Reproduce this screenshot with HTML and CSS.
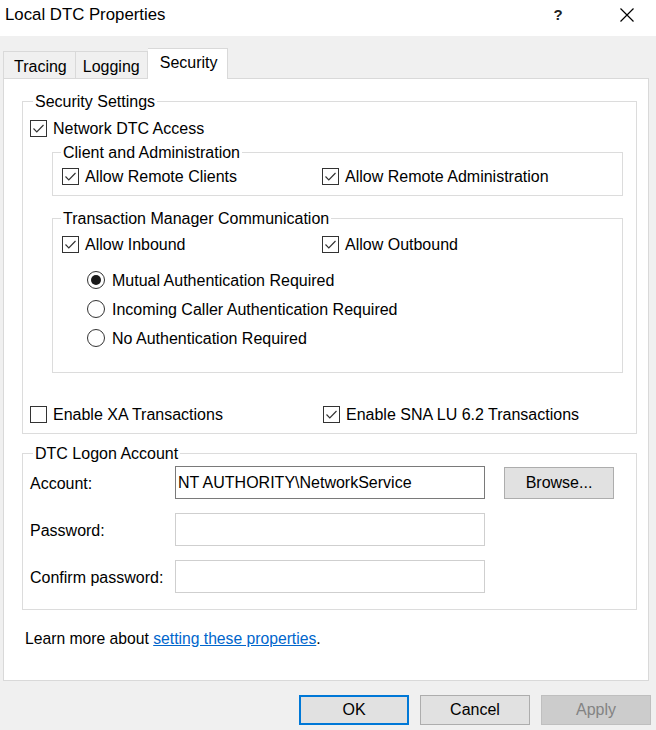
FILE: index.html
```html
<!DOCTYPE html>
<html lang="en">
<head>
    <meta charset="UTF-8">
    <title>Local DTC Properties</title>
    <link rel="stylesheet" href="styles.css">
</head>
<body>
    <div class="titlebar">
        <span class="title">Local DTC Properties</span>
        <div class="caption-btns">
            <span class="help">?</span>
            <span class="close">
                <svg width="16" height="16" viewBox="0 0 16 16"><path d="M1.5 1.5 L14.5 14.5 M14.5 1.5 L1.5 14.5" stroke="#000" stroke-width="1.2" fill="none"/></svg>
            </span>
        </div>
    </div>

    <div class="tabs">
        <div class="tab first">Tracing</div>
        <div class="tab">Logging</div>
        <div class="tab selected">Security</div>
    </div>

    <div class="panel">
        <fieldset class="group security">
            <legend>Security Settings</legend>
            <div class="check">
                <span class="box"><svg width="15" height="15" viewBox="0 0 15 15"><path d="M2.5 7.5 L5.8 10.8 L12.5 4" stroke="#333" stroke-width="1.2" fill="none"/></svg></span>
                <span class="text">Network DTC Access</span>
            </div>

            <fieldset class="group sub client">
                <legend>Client and Administration</legend>
                <div class="cols">
                    <div class="check">
                        <span class="box"><svg width="15" height="15" viewBox="0 0 15 15"><path d="M2.5 7.5 L5.8 10.8 L12.5 4" stroke="#333" stroke-width="1.2" fill="none"/></svg></span>
                        <span class="text">Allow Remote Clients</span>
                    </div>
                    <div class="check">
                        <span class="box"><svg width="15" height="15" viewBox="0 0 15 15"><path d="M2.5 7.5 L5.8 10.8 L12.5 4" stroke="#333" stroke-width="1.2" fill="none"/></svg></span>
                        <span class="text">Allow Remote Administration</span>
                    </div>
                </div>
            </fieldset>

            <fieldset class="group sub tmc">
                <legend>Transaction Manager Communication</legend>
                <div class="cols">
                    <div class="check">
                        <span class="box"><svg width="15" height="15" viewBox="0 0 15 15"><path d="M2.5 7.5 L5.8 10.8 L12.5 4" stroke="#333" stroke-width="1.2" fill="none"/></svg></span>
                        <span class="text">Allow Inbound</span>
                    </div>
                    <div class="check">
                        <span class="box"><svg width="15" height="15" viewBox="0 0 15 15"><path d="M2.5 7.5 L5.8 10.8 L12.5 4" stroke="#333" stroke-width="1.2" fill="none"/></svg></span>
                        <span class="text">Allow Outbound</span>
                    </div>
                </div>
                <div class="radios">
                    <div class="radio selected"><span class="circle"></span><span class="text">Mutual Authentication Required</span></div>
                    <div class="radio"><span class="circle"></span><span class="text">Incoming Caller Authentication Required</span></div>
                    <div class="radio"><span class="circle"></span><span class="text">No Authentication Required</span></div>
                </div>
            </fieldset>

            <div class="cols wide">
                <div class="check">
                    <span class="box"></span>
                    <span class="text">Enable XA Transactions</span>
                </div>
                <div class="check">
                    <span class="box"><svg width="15" height="15" viewBox="0 0 15 15"><path d="M2.5 7.5 L5.8 10.8 L12.5 4" stroke="#333" stroke-width="1.2" fill="none"/></svg></span>
                    <span class="text">Enable SNA LU 6.2 Transactions</span>
                </div>
            </div>
        </fieldset>

        <fieldset class="group logon">
            <legend>DTC Logon Account</legend>
            <div class="field">
                <span class="field-label">Account:</span>
                <input class="input active" type="text" value="NT AUTHORITY\NetworkService" readonly>
                <button class="btn browse">Browse...</button>
            </div>
            <div class="field">
                <span class="field-label">Password:</span>
                <input class="input" type="text" readonly>
            </div>
            <div class="field">
                <span class="field-label">Confirm password:</span>
                <input class="input" type="text" readonly>
            </div>
        </fieldset>

        <p class="learn">Learn more about <a href="#">setting these properties</a>.</p>
    </div>

    <div class="buttons">
        <button class="btn default">OK</button>
        <button class="btn">Cancel</button>
        <button class="btn disabled">Apply</button>
    </div>
</body>
</html>
```

FILE: styles.css
```css
html {
    overflow: hidden;
}
body {
    margin: 0;
    width: 656px;
    height: 730px;
    background-color: #f0f0f0;
    font-family: "Liberation Sans", Arial, sans-serif;
    font-size: 16px;
    line-height: 18px;
    color: #000;
}
.titlebar {
    height: 36px;
    background-color: #fff;
    display: flex;
    justify-content: space-between;
    align-items: flex-start;
    box-sizing: border-box;
    padding: 6px 6px 0 5px;
}
.title {
    font-size: 16.8px;
}
.caption-btns {
    display: flex;
    gap: 21px;
}
.help, .close {
    width: 46px;
    height: 18px;
    display: flex;
    justify-content: center;
    align-items: center;
}
.help {
    font-size: 15px;
    font-weight: bold;
    color: #222;
    padding-right: 4px;
    box-sizing: border-box;
}
.tabs {
    display: flex;
    align-items: flex-end;
    height: 30px;
    margin-top: 12px;
    padding-left: 3px;
}
.tab {
    height: 27px;
    box-sizing: border-box;
    padding: 3px 7px 0 7px;
    display: flex;
    align-items: center;
    border-top: 1px solid #d9d9d9;
    border-right: 1px solid #d9d9d9;
    background-color: #f0f0f0;
}
.tab.first {
    border-left: 1px solid #d9d9d9;
    padding-left: 10px;
    padding-right: 8px;
}
.tab.selected {
    height: 31px;
    margin-bottom: -1px;
    padding: 0 9px 2px 12px;
    background-color: #fff;
    border-left: none;
    position: relative;
    z-index: 1;
}
.panel {
    width: 646px;
    height: 603px;
    margin-left: 3px;
    box-sizing: border-box;
    background-color: #fff;
    border: 1px solid #d9d9d9;
    padding-top: 13px;
}
.group {
    border: 1px solid #dcdcdc;
    margin: 0 11px 0 18px;
    padding: 0 7px;
    min-inline-size: auto;
}
.group legend {
    margin-left: 3px;
    padding: 1px 2px 0;
    line-height: 17px;
}
.security {
    padding-top: 9px;
    padding-bottom: 10px;
}
.sub {
    margin: 0 6px 0 22px;
    padding-left: 9px;
    padding-right: 9px;
}
.sub legend {
    margin-left: -1px;
}
.client {
    margin-top: 6px;
    padding-top: 6px;
    padding-bottom: 10px;
}
.tmc {
    margin-top: 13px;
    padding-top: 8px;
    padding-bottom: 25px;
}
.cols {
    display: grid;
    grid-template-columns: 260px 1fr;
}
.cols.wide {
    grid-template-columns: 293px 1fr;
    margin-top: 32px;
}
.check, .radio {
    display: flex;
    align-items: center;
    height: 18px;
    white-space: nowrap;
}
.check .text, .radio .text {
    padding-top: 1px;
}
.box {
    width: 17px;
    height: 17px;
    box-sizing: border-box;
    border: 1px solid #333;
    display: flex;
    align-items: center;
    justify-content: center;
    flex-shrink: 0;
}
.check .text {
    margin-left: 6px;
}
.radios {
    margin-top: 18px;
    padding-left: 25px;
    display: flex;
    flex-direction: column;
    gap: 11px;
}
.circle {
    width: 18px;
    height: 18px;
    box-sizing: border-box;
    border: 1px solid #333;
    border-radius: 50%;
    display: flex;
    align-items: center;
    justify-content: center;
    flex-shrink: 0;
}
.radio.selected .circle::after {
    content: "";
    width: 10px;
    height: 10px;
    border-radius: 50%;
    background-color: #1a1a1a;
}
.radio .text {
    margin-left: 7px;
}
.logon {
    margin-top: 10px;
    padding-top: 4px;
    padding-bottom: 16px;
}
.field {
    display: flex;
    align-items: center;
    height: 33px;
    margin-bottom: 14px;
}
.field:last-child {
    margin-bottom: 0;
}
.field-label {
    width: 145px;
    flex-shrink: 0;
    padding-top: 2px;
}
.input {
    width: 310px;
    height: 33px;
    box-sizing: border-box;
    border: 1px solid #cfcfcf;
    padding: 0 2px;
    margin: 0;
    font-family: inherit;
    font-size: 16px;
    color: #000;
    background-color: #fff;
    outline: none;
}
.input.active {
    border-color: #7a7a7a;
}
.btn {
    width: 110px;
    height: 30px;
    box-sizing: border-box;
    background-color: #e1e1e1;
    border: 1px solid #adadad;
    font-family: inherit;
    font-size: 16px;
    color: #000;
    padding: 0;
}
.browse {
    margin-left: 19px;
    height: 32px;
}
.learn {
    margin: 20px 0 0 0;
    padding-left: 21px;
    font-size: 15.7px;
}
.learn a {
    color: #0066cc;
}
.buttons {
    display: flex;
    justify-content: flex-end;
    gap: 11px;
    margin-top: 14px;
    padding-right: 5px;
}
.btn.default {
    border: 2px solid #0078d7;
}
.btn.disabled {
    background-color: #cccccc;
    border-color: #bfbfbf;
    color: #838383;
}
```
